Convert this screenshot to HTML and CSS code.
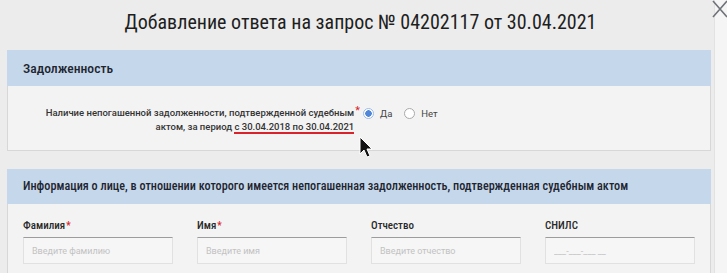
FILE: index.html
```html
<!DOCTYPE html>
<html lang="ru">
<head>
  <meta charset="UTF-8">
  <title>Добавление ответа на запрос</title>
  <link rel="stylesheet" href="styles.css">
</head>
<body>

  <div class="modal">
    <h1 class="modal-title">Добавление ответа на запрос № 04202117 от 30.04.2021</h1>

    <div class="panel">
      <div class="panel-head">Задолженность</div>
      <div class="panel-body debt-body">
        <div class="debt-row">
          <div class="req-label">
            <span class="req-text">Наличие непогашенной задолженности, подтвержденной судебным<br>актом, за период <span class="mark">с 30.04.2018 по 30.04.2021</span></span>
            <span class="star">*</span>
          </div>
          <label class="radio"><span class="dot checked"></span>Да</label>
          <label class="radio"><span class="dot"></span>Нет</label>
        </div>
        <svg class="cursor" width="16" height="24" viewBox="0 0 16 24">
          <path d="M1 1 L1 18 L5 14 L8 21 L11 20 L8 13 L13 13 Z" fill="#111" stroke="#fff" stroke-width="1"/>
        </svg>
      </div>
    </div>

    <div class="panel">
      <div class="panel-head">Информация о лице, в отношении которого имеется непогашенная задолженность, подтвержденная судебным актом</div>
      <div class="panel-body person-body">
        <div class="field">
          <div class="field-label">Фамилия<span class="star">*</span></div>
          <input class="field-input" type="text" placeholder="Введите фамилию">
        </div>
        <div class="field">
          <div class="field-label">Имя<span class="star">*</span></div>
          <input class="field-input" type="text" placeholder="Введите имя">
        </div>
        <div class="field">
          <div class="field-label">Отчество</div>
          <input class="field-input" type="text" placeholder="Введите отчество">
        </div>
        <div class="field">
          <div class="field-label">СНИЛС</div>
          <input class="field-input" type="text" placeholder="___-___-___ __">
        </div>
      </div>
    </div>

    <svg class="close" width="16" height="18" viewBox="0 0 16 18">
      <path d="M1 1 L15 17 M15 1 L1 17" stroke="#6f7378" stroke-width="1.6"/>
    </svg>
  </div>
  <div class="scroll-strip"></div>

</body>
</html>
```

FILE: styles.css
```css
body {
  margin: 0;
  display: flex;
  height: 273px;
  overflow: hidden;
  background: #ececec;
  font-family: Roboto, "Liberation Sans", sans-serif;
  font-stretch: 75%;
  color: #222;
}
.modal { position: relative; width: 714px; padding-left: 7px; box-sizing: border-box; }
.scroll-strip { flex: 1; background: #f5f5f5; border-left: 1px solid #e2e2e2; }

.modal-title {
  margin: 0;
  height: 50px;
  line-height: 45px;
  text-align: center;
  font-size: 20px;
  font-weight: normal;
  color: #1e1e1e;
}

.panel { width: 704px; margin-bottom: 18px; }
.panel-head {
  height: 36px;
  line-height: 36px;
  padding-left: 16px;
  background: #c5d8eb;
  font-size: 13.6px;
  font-weight: 500;
  color: #1f2530;
  white-space: nowrap;
}
.panel + .panel .panel-head { height: 35px; line-height: 34px; font-size: 12.2px; }
.panel-body {
  background: #f3f3f3;
  border: 1px solid #d7d7d7;
  border-top: none;
}

.debt-body { position: relative; height: 64px; }
.debt-row { display: flex; align-items: flex-start; padding-top: 20px; }
.req-label { display: flex; width: 352px; justify-content: flex-end; }
.req-text {
  text-align: right;
  font-stretch: 100%;
  font-size: 9.5px;
  font-weight: 500;
  line-height: 14px;
  color: #333;
}
.mark { border-bottom: 2px solid #d8232a; }
.star { color: #d8232a; font-size: 11px; line-height: 10px; margin-left: 1px; }

.radio {
  display: flex;
  align-items: center;
  height: 14px;
  margin-left: 3px;
  margin-right: 9px;
  font-stretch: 100%;
  font-size: 9.5px;
  color: #444;
}
.dot {
  width: 9px;
  height: 9px;
  border: 1px solid #a9a9a9;
  border-radius: 50%;
  background: #fff;
  margin-right: 6px;
}
.dot.checked {
  border-color: #9dbbe6;
  background: radial-gradient(circle, #4f86d8 0 3px, #fff 3.5px);
}

.cursor { position: absolute; left: 351px; top: 50px; }

.person-body {
  display: grid;
  grid-template-columns: repeat(4, 150px);
  column-gap: 24px;
  padding: 14px 0 14px 15px;
}
.field-label {
  font-size: 11px;
  font-weight: 500;
  color: #2a2a2a;
  height: 16px;
  line-height: 16px;
  margin-bottom: 3px;
}
.field-label .star { font-size: 10px; }
.field-input {
  width: 150px;
  height: 27px;
  box-sizing: border-box;
  border: 1px solid #e1e1e1;
  border-top: 1px solid #9c9c9c;
  background: #f6f6f6;
  padding: 0 8px;
  font-family: Roboto, sans-serif;
  font-stretch: 100%;
  font-size: 9px;
}
.field-input::placeholder { color: #c2c2c2; }

.close { position: absolute; right: -14px; top: 0; }
```
